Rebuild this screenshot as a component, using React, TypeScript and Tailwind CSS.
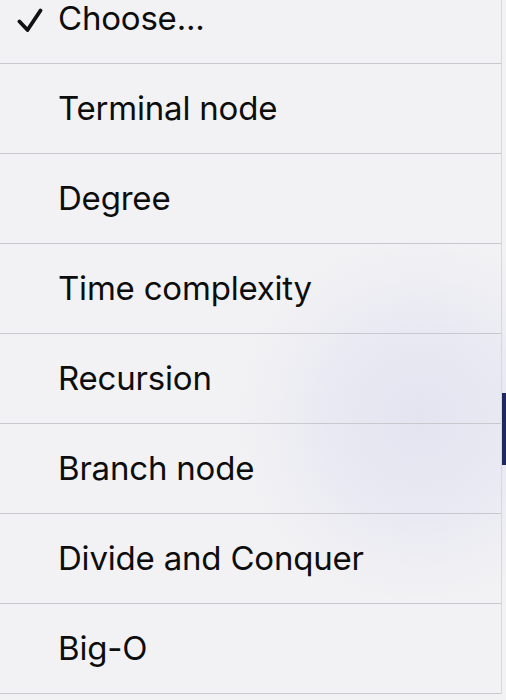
import React from "react";

const items = [
  "Choose...",
  "Terminal node",
  "Degree",
  "Time complexity",
  "Recursion",
  "Branch node",
  "Divide and Conquer",
  "Big-O",
];

export default function App() {
  return (
    <div
      className="relative w-[506px] h-[700px] overflow-hidden bg-[#f2f2f4]"
      style={{ fontFamily: "Inter, 'Noto Sans', 'Liberation Sans', sans-serif" }}
    >
      <div className="absolute left-[230px] top-[240px] w-[380px] h-[360px] rounded-full bg-[radial-gradient(circle,#e4e4f1_0%,#e9e9f3_35%,rgba(242,242,244,0)_70%)]" />
      <div className="relative w-[502px] -mt-[26px] border-r border-[#d8d8dc]">
        {items.map((t, i) => (
          <div
            key={t}
            className="relative h-[90px] flex items-center border-b border-[#c9c9cd] box-border"
          >
            {i === 0 && (
              <svg
                className="absolute left-[17px] top-[34px]"
                width="26"
                height="25"
                viewBox="0 0 26 25"
                fill="none"
              >
                <path
                  d="M2.5 13.5 L10.5 22 L23.5 2.5"
                  stroke="#111"
                  strokeWidth="3.8"
                  strokeLinecap="round"
                  strokeLinejoin="round"
                />
              </svg>
            )}
            <span className="pl-[58px] text-[33px] leading-none text-[#0d0d0d] tracking-[-0.2px]">
              {t}
            </span>
          </div>
        ))}
      </div>
      <div className="absolute left-[502px] top-[393px] w-[4px] h-[72px] bg-[#1f2a5c]" />
    </div>
  );
}
